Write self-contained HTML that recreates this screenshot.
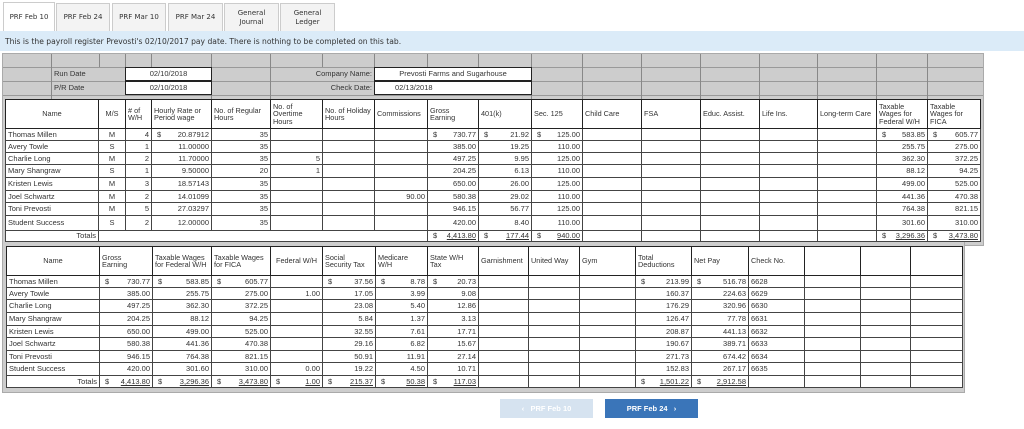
<!DOCTYPE html>
<html><head><meta charset="utf-8"><style>
*{box-sizing:border-box;margin:0;padding:0}
body{width:1024px;height:429px;background:#fff;position:relative;overflow:hidden;font-family:"Liberation Sans",Arial,sans-serif;color:#333}
.tab{position:absolute;top:3px;height:28px;border:1px solid #ccc;border-bottom:none;background:#f3f3f3;font-family:"DejaVu Sans",sans-serif;font-size:7px;color:#333;display:flex;align-items:center;justify-content:center;text-align:center;line-height:9px}
.tab.a{background:#fff;top:2px;height:30px}
.banner{position:absolute;left:0;top:31px;width:1024px;height:20px;background:#dbebf8;font-family:"DejaVu Sans",sans-serif;font-size:7.6px;color:#333;padding:6px 0 0 5px}
.gray{position:absolute;background:#cdcdcd;border:1px solid #aaa}
.vl{position:absolute;width:1px;background:#888}
.hl{position:absolute;height:1px;background:#999}
.box{position:absolute;background:#fff;border:1px solid #222;font-size:7.5px;height:14px;line-height:12px}
.lbl{position:absolute;font-size:7.5px;line-height:14px;color:#333}
table{position:absolute;border-collapse:collapse;table-layout:fixed;background:#fff;font-size:7.5px;color:#333}
td{border:1px solid #444;padding:0 2px;white-space:nowrap;overflow:hidden;line-height:8px}
td.r{text-align:right}
td.c{text-align:center}
.d{float:left;padding-left:3px}
.u{text-decoration:underline}
th{font-weight:normal;text-align:left;vertical-align:middle;border:1px solid #222;padding:0 2px;line-height:7.5px;font-size:7.3px}
.btn{position:absolute;top:399px;height:19px;width:93px;font-size:7.5px;font-weight:bold;color:#fff;display:flex;align-items:center;justify-content:center}
</style></head><body>
<div class="tab a" style="left:3px;width:52px">PRF Feb 10</div>
<div class="tab" style="left:56px;width:54px">PRF Feb 24</div>
<div class="tab" style="left:112px;width:54px">PRF Mar 10</div>
<div class="tab" style="left:168px;width:55px">PRF Mar 24</div>
<div class="tab" style="left:224px;width:55px">General<br>Journal</div>
<div class="tab" style="left:280px;width:55px">General<br>Ledger</div>
<div class="banner">This is the payroll register Prevosti's 02/10/2017 pay date. There is nothing to be completed on this tab.</div>

<div class="gray" style="left:2px;top:53px;width:982px;height:193px"></div>
<div class="gray" style="left:2px;top:240px;width:963px;height:153px;border-top:none"></div>
<div class="hl" style="left:3px;top:67px;width:980px"></div>
<div class="hl" style="left:3px;top:81px;width:980px"></div>
<div class="hl" style="left:3px;top:95px;width:980px"></div>
<div class="vl" style="left:51px;top:54px;height:45px"></div>
<div class="vl" style="left:99px;top:54px;height:13px"></div>
<div class="vl" style="left:125px;top:54px;height:13px"></div>
<div class="vl" style="left:151px;top:54px;height:13px"></div>
<div class="vl" style="left:211px;top:54px;height:45px"></div>
<div class="vl" style="left:270px;top:54px;height:45px"></div>
<div class="vl" style="left:322px;top:54px;height:13px"></div>
<div class="vl" style="left:374px;top:54px;height:13px"></div>
<div class="vl" style="left:427px;top:54px;height:13px"></div>
<div class="vl" style="left:478px;top:54px;height:13px"></div>
<div class="vl" style="left:531px;top:54px;height:45px"></div>
<div class="vl" style="left:582px;top:54px;height:45px"></div>
<div class="vl" style="left:641px;top:54px;height:45px"></div>
<div class="vl" style="left:700px;top:54px;height:45px"></div>
<div class="vl" style="left:759px;top:54px;height:45px"></div>
<div class="vl" style="left:817px;top:54px;height:45px"></div>
<div class="vl" style="left:876px;top:54px;height:45px"></div>
<div class="vl" style="left:927px;top:54px;height:45px"></div>
<div class="lbl" style="left:54px;top:67px">Run Date</div>
<div class="lbl" style="left:54px;top:81px">P/R Date</div>
<div class="box" style="left:125px;top:67px;width:87px;text-align:center">02/10/2018</div>
<div class="box" style="left:125px;top:81px;width:87px;text-align:center">02/10/2018</div>
<div class="lbl" style="left:270px;top:67px;width:102px;text-align:right">Company Name:</div>
<div class="lbl" style="left:270px;top:81px;width:102px;text-align:right">Check Date:</div>
<div class="box" style="left:374px;top:67px;width:158px;text-align:center">Prevosti Farms and Sugarhouse</div>
<div class="box" style="left:374px;top:81px;width:158px;padding-left:20px">02/13/2018</div>

<table style="left:5px;top:99px;width:975px">
<colgroup><col style="width:93px"><col style="width:27px"><col style="width:26px"><col style="width:60px"><col style="width:59px"><col style="width:52px"><col style="width:52px"><col style="width:53px"><col style="width:51px"><col style="width:53px"><col style="width:51px"><col style="width:59px"><col style="width:59px"><col style="width:59px"><col style="width:58px"><col style="width:59px"><col style="width:51px"><col style="width:53px"></colgroup>
<tr style="height:29px"><th style="text-align:center">Name</th><th style="text-align:center">M/S</th><th>&#35; of<br>W/H</th><th>Hourly Rate or<br>Period wage</th><th>No. of Regular<br>Hours</th><th>No. of<br>Overtime<br>Hours</th><th>No. of Holiday<br>Hours</th><th>Commissions</th><th>Gross<br>Earning</th><th>401(k)</th><th>Sec. 125</th><th>Child Care</th><th>FSA</th><th>Educ. Assist.</th><th>Life Ins.</th><th>Long-term Care</th><th>Taxable<br>Wages for<br>Federal W/H</th><th>Taxable<br>Wages for<br>FICA</th></tr>
<tr style="height:12px"><td>Thomas Millen</td><td class="c">M</td><td class="r">4</td><td class="r"><span class="d">$</span>20.87912</td><td class="r">35</td><td></td><td></td><td></td><td class="r"><span class="d">$</span>730.77</td><td class="r"><span class="d">$</span>21.92</td><td class="r"><span class="d">$</span>125.00</td><td></td><td></td><td></td><td></td><td></td><td class="r"><span class="d">$</span>583.85</td><td class="r"><span class="d">$</span>605.77</td></tr>
<tr style="height:12px"><td>Avery Towle</td><td class="c">S</td><td class="r">1</td><td class="r">11.00000</td><td class="r">35</td><td></td><td></td><td></td><td class="r">385.00</td><td class="r">19.25</td><td class="r">110.00</td><td></td><td></td><td></td><td></td><td></td><td class="r">255.75</td><td class="r">275.00</td></tr>
<tr style="height:12px"><td>Charlie Long</td><td class="c">M</td><td class="r">2</td><td class="r">11.70000</td><td class="r">35</td><td class="r">5</td><td></td><td></td><td class="r">497.25</td><td class="r">9.95</td><td class="r">125.00</td><td></td><td></td><td></td><td></td><td></td><td class="r">362.30</td><td class="r">372.25</td></tr>
<tr style="height:13px"><td>Mary Shangraw</td><td class="c">S</td><td class="r">1</td><td class="r">9.50000</td><td class="r">20</td><td class="r">1</td><td></td><td></td><td class="r">204.25</td><td class="r">6.13</td><td class="r">110.00</td><td></td><td></td><td></td><td></td><td></td><td class="r">88.12</td><td class="r">94.25</td></tr>
<tr style="height:13px"><td>Kristen Lewis</td><td class="c">M</td><td class="r">3</td><td class="r">18.57143</td><td class="r">35</td><td></td><td></td><td></td><td class="r">650.00</td><td class="r">26.00</td><td class="r">125.00</td><td></td><td></td><td></td><td></td><td></td><td class="r">499.00</td><td class="r">525.00</td></tr>
<tr style="height:12px"><td>Joel Schwartz</td><td class="c">M</td><td class="r">2</td><td class="r">14.01099</td><td class="r">35</td><td></td><td></td><td class="r">90.00</td><td class="r">580.38</td><td class="r">29.02</td><td class="r">110.00</td><td></td><td></td><td></td><td></td><td></td><td class="r">441.36</td><td class="r">470.38</td></tr>
<tr style="height:13px"><td>Toni Prevosti</td><td class="c">M</td><td class="r">5</td><td class="r">27.03297</td><td class="r">35</td><td></td><td></td><td></td><td class="r">946.15</td><td class="r">56.77</td><td class="r">125.00</td><td></td><td></td><td></td><td></td><td></td><td class="r">764.38</td><td class="r">821.15</td></tr>
<tr style="height:15px"><td>Student Success</td><td class="c">S</td><td class="r">2</td><td class="r">12.00000</td><td class="r">35</td><td></td><td></td><td></td><td class="r">420.00</td><td class="r">8.40</td><td class="r">110.00</td><td></td><td></td><td></td><td></td><td></td><td class="r">301.60</td><td class="r">310.00</td></tr>
<tr style="height:11px"><td class="r">Totals</td><td colspan="7"></td><td class="r"><span class="d">$</span><span class="u">4,413.80</span></td><td class="r"><span class="d">$</span><span class="u">177.44</span></td><td class="r"><span class="d">$</span><span class="u">940.00</span></td><td></td><td></td><td></td><td></td><td></td><td class="r"><span class="d">$</span><span class="u">3,296.36</span></td><td class="r"><span class="d">$</span><span class="u">3,473.80</span></td></tr>
</table>

<table style="left:6px;top:246px;width:956px">
<colgroup><col style="width:93px"><col style="width:53px"><col style="width:59px"><col style="width:59px"><col style="width:52px"><col style="width:53px"><col style="width:52px"><col style="width:51px"><col style="width:50px"><col style="width:51px"><col style="width:56px"><col style="width:56px"><col style="width:57px"><col style="width:56px"><col style="width:56px"><col style="width:50px"><col style="width:52px"></colgroup>
<tr style="height:29px"><th style="text-align:center">Name</th><th>Gross<br>Earning</th><th>Taxable Wages<br>for Federal W/H</th><th>Taxable Wages<br>for FICA</th><th style="text-align:center">Federal W/H</th><th>Social<br>Security Tax</th><th>Medicare<br>W/H</th><th>State W/H<br>Tax</th><th>Garnishment</th><th>United Way</th><th>Gym</th><th>Total<br>Deductions</th><th>Net Pay</th><th>Check No.</th><th></th><th></th><th></th></tr>
<tr style="height:12px"><td>Thomas Millen</td><td class="r"><span class="d">$</span>730.77</td><td class="r"><span class="d">$</span>583.85</td><td class="r"><span class="d">$</span>605.77</td><td></td><td class="r"><span class="d">$</span>37.56</td><td class="r"><span class="d">$</span>8.78</td><td class="r"><span class="d">$</span>20.73</td><td></td><td></td><td></td><td class="r"><span class="d">$</span>213.99</td><td class="r"><span class="d">$</span>516.78</td><td>6628</td><td></td><td></td><td></td></tr>
<tr style="height:12px"><td>Avery Towle</td><td class="r">385.00</td><td class="r">255.75</td><td class="r">275.00</td><td class="r">1.00</td><td class="r">17.05</td><td class="r">3.99</td><td class="r">9.08</td><td></td><td></td><td></td><td class="r">160.37</td><td class="r">224.63</td><td>6629</td><td></td><td></td><td></td></tr>
<tr style="height:13px"><td>Charlie Long</td><td class="r">497.25</td><td class="r">362.30</td><td class="r">372.25</td><td></td><td class="r">23.08</td><td class="r">5.40</td><td class="r">12.86</td><td></td><td></td><td></td><td class="r">176.29</td><td class="r">320.96</td><td>6630</td><td></td><td></td><td></td></tr>
<tr style="height:13px"><td>Mary Shangraw</td><td class="r">204.25</td><td class="r">88.12</td><td class="r">94.25</td><td></td><td class="r">5.84</td><td class="r">1.37</td><td class="r">3.13</td><td></td><td></td><td></td><td class="r">126.47</td><td class="r">77.78</td><td>6631</td><td></td><td></td><td></td></tr>
<tr style="height:12px"><td>Kristen Lewis</td><td class="r">650.00</td><td class="r">499.00</td><td class="r">525.00</td><td></td><td class="r">32.55</td><td class="r">7.61</td><td class="r">17.71</td><td></td><td></td><td></td><td class="r">208.87</td><td class="r">441.13</td><td>6632</td><td></td><td></td><td></td></tr>
<tr style="height:13px"><td>Joel Schwartz</td><td class="r">580.38</td><td class="r">441.36</td><td class="r">470.38</td><td></td><td class="r">29.16</td><td class="r">6.82</td><td class="r">15.67</td><td></td><td></td><td></td><td class="r">190.67</td><td class="r">389.71</td><td>6633</td><td></td><td></td><td></td></tr>
<tr style="height:12px"><td>Toni Prevosti</td><td class="r">946.15</td><td class="r">764.38</td><td class="r">821.15</td><td></td><td class="r">50.91</td><td class="r">11.91</td><td class="r">27.14</td><td></td><td></td><td></td><td class="r">271.73</td><td class="r">674.42</td><td>6634</td><td></td><td></td><td></td></tr>
<tr style="height:13px"><td>Student Success</td><td class="r">420.00</td><td class="r">301.60</td><td class="r">310.00</td><td class="r">0.00</td><td class="r">19.22</td><td class="r">4.50</td><td class="r">10.71</td><td></td><td></td><td></td><td class="r">152.83</td><td class="r">267.17</td><td>6635</td><td></td><td></td><td></td></tr>
<tr style="height:12px"><td class="r">Totals</td><td class="r"><span class="d">$</span><span class="u">4,413.80</span></td><td class="r"><span class="d">$</span><span class="u">3,296.36</span></td><td class="r"><span class="d">$</span><span class="u">3,473.80</span></td><td class="r"><span class="d">$</span><span class="u">1.00</span></td><td class="r"><span class="d">$</span><span class="u">215.37</span></td><td class="r"><span class="d">$</span><span class="u">50.38</span></td><td class="r"><span class="d">$</span><span class="u">117.03</span></td><td></td><td></td><td></td><td class="r"><span class="d">$</span><span class="u">1,501.22</span></td><td class="r"><span class="d">$</span><span class="u">2,912.58</span></td><td></td><td></td><td></td><td></td></tr>
</table>
<div style="position:absolute;left:0;top:393px;width:1024px;height:36px;background:#fff"></div>

<div class="btn" style="left:500px;background:#d6e3f0">&#8249;&nbsp;&nbsp;&nbsp;PRF Feb 10</div>
<div class="btn" style="left:605px;background:#3a75b9">PRF Feb 24&nbsp;&nbsp;&nbsp;&#8250;</div>
</body></html>
